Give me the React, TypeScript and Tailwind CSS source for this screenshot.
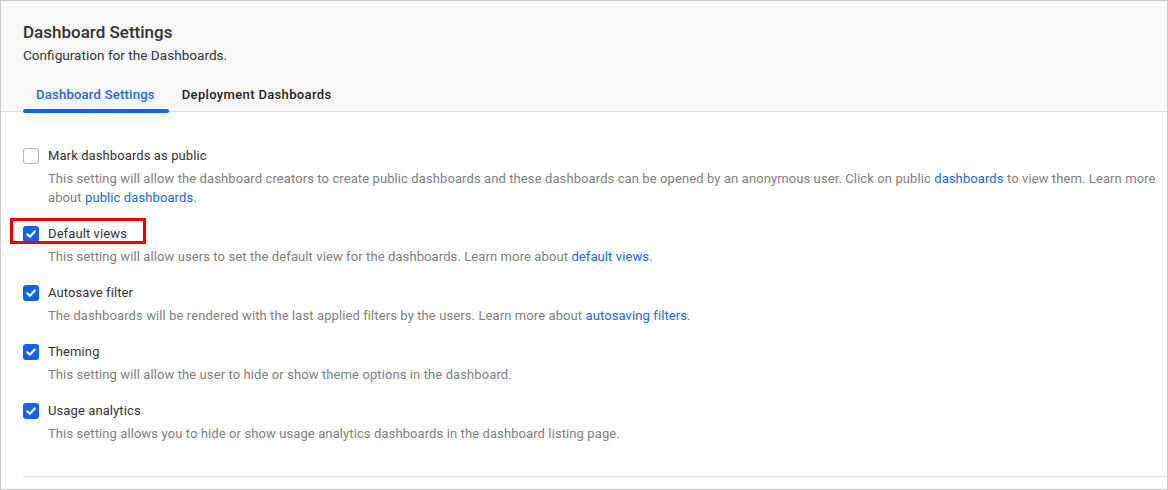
import React from "react";

function Check({ checked }: { checked: boolean }) {
  if (!checked) {
    return <span className="block w-4 h-4 shrink-0 rounded-[3px] border border-[#b5b5b5] bg-white" />;
  }
  return (
    <span className="flex w-4 h-4 shrink-0 items-center justify-center rounded-[3px] bg-[#0d63f3]">
      <svg width="12" height="12" viewBox="0 0 12 12" fill="none">
        <path d="M2.2 6.3 L4.8 8.8 L9.8 3.4" stroke="white" strokeWidth="2.2" strokeLinecap="round" strokeLinejoin="round" />
      </svg>
    </span>
  );
}

function Link({ children }: { children: React.ReactNode }) {
  return <span className="text-[#1a66f5]">{children}</span>;
}

function Row({
  checked,
  label,
  highlight,
  children,
}: {
  checked: boolean;
  label: string;
  highlight?: boolean;
  children: React.ReactNode;
}) {
  return (
    <div className="flex flex-col">
      <div className="relative flex items-center h-[19px]">
        <Check checked={checked} />
        <span className="ml-[9px] text-[13px] leading-[19px] tracking-[0.1px] text-[#333]">{label}</span>
        {highlight && (
          <span className="absolute left-[-13px] top-[-6px] w-[136px] h-[26px] border-[3px] border-[#f00000]" />
        )}
      </div>
      <p className="mt-[4px] pl-[25px] text-[13px] leading-[19px] tracking-[0.1px] text-[#808080]">{children}</p>
    </div>
  );
}

export default function App() {
  return (
    <div
      className="w-[1168px] h-[490px] border border-[#c8c8c8] bg-white overflow-hidden flex flex-col"
      style={{ fontFamily: "Roboto, 'Noto Sans', sans-serif" }}
    >
      <div className="bg-[#f9f9f9] border-b border-[#e0e0e0] px-[22px] pt-[21px]">
        <h1 className="text-[17px] leading-[20px] font-medium text-[#333]">Dashboard Settings</h1>
        <p className="mt-[3px] text-[13.6px] leading-[20px] text-[#333]">Configuration for the Dashboards.</p>
        <div className="flex mt-[21px]">
          <div className="relative pl-[13px] pr-[14px] pb-[7px] text-[13px] leading-[18px] font-medium tracking-[0.25px] text-[#1a66f5]">
            Dashboard Settings
            <span className="absolute left-0 right-0 bottom-[-2px] h-[4px] rounded-full bg-[#0d63f3]" />
          </div>
          <div className="px-[13px] pb-[7px] text-[13px] leading-[18px] font-medium tracking-[0.35px] text-[#222]">
            Deployment Dashboards
          </div>
        </div>
      </div>
      <div className="pl-[22px] pr-[4px] pt-[34px] flex flex-col gap-[17px]">
        <Row checked={false} label="Mark dashboards as public">
          This setting will allow the dashboard creators to create public dashboards and these dashboards can be opened by an anonymous user. Click on public <Link>dashboards</Link> to view them. Learn more about <Link>public dashboards</Link>.
        </Row>
        <Row checked={true} label="Default views" highlight>
          This setting will allow users to set the default view for the dashboards. Learn more about <Link>default views</Link>.
        </Row>
        <Row checked={true} label="Autosave filter">
          The dashboards will be rendered with the last applied filters by the users. Learn more about <Link>autosaving filters</Link>.
        </Row>
        <Row checked={true} label="Theming">
          This setting will allow the user to hide or show theme options in the dashboard.
        </Row>
        <Row checked={true} label="Usage analytics">
          This setting allows you to hide or show usage analytics dashboards in the dashboard listing page.
        </Row>
      </div>
      <div className="ml-[22px] mt-[33px] border-t border-[#e2e2e2]" />
    </div>
  );
}
